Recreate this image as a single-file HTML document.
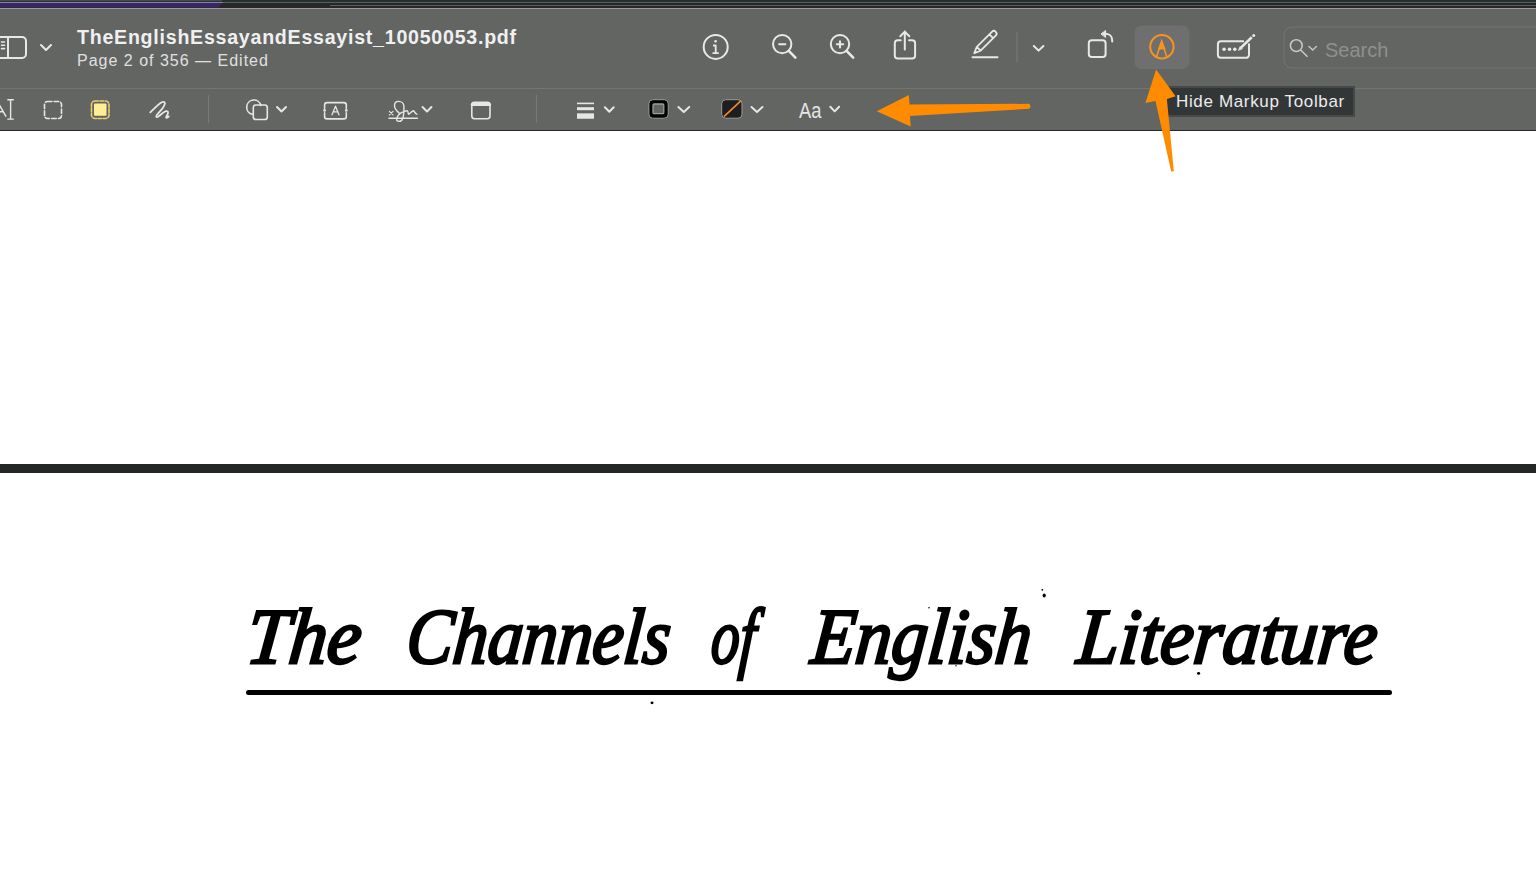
<!DOCTYPE html>
<html><head><meta charset="utf-8">
<style>
*{margin:0;padding:0;box-sizing:border-box}
html,body{width:1536px;height:895px;overflow:hidden;background:#fff;font-family:"Liberation Sans",sans-serif}
.abs{position:absolute}
#toolbar{left:0;top:9px;width:1536px;height:122px;background:#636563}
.title{left:77px;top:25px;font-size:19.6px;font-weight:bold;color:#f0f0f0;letter-spacing:0.75px;white-space:nowrap;line-height:24px}
.sub{left:77px;top:52px;font-size:16px;color:#e0e0e0;white-space:nowrap;line-height:18px;letter-spacing:1.0px}
.search{left:1325px;top:37.5px;font-size:20.5px;color:#8f908f;line-height:24px;transform:scaleX(0.975);transform-origin:0 0}
.aa{left:799px;top:98.6px;font-size:21.5px;color:#e6e6e6;line-height:24px;transform:scaleX(0.85);transform-origin:0 0}
.tip{left:1165px;top:86px;width:189.5px;height:30.5px;background:#333637;border:2px solid #474949}
.tiptxt{left:1176px;top:91.5px;font-size:17px;letter-spacing:0.65px;color:#ececec;white-space:nowrap;line-height:19px}
.w{position:absolute;font-family:"Liberation Serif",serif;font-style:italic;font-weight:normal;font-size:80px;color:#000;-webkit-text-stroke:2.8px #000;line-height:80px;white-space:nowrap;transform-origin:0 65px}
svg.ov{position:absolute;left:0;top:0;overflow:visible}
</style></head><body>
<!-- top strip -->
<div class="abs" style="left:0;top:0;width:1536px;height:1px;background:#1d3036"></div>
<div class="abs" style="left:0;top:0;width:222px;height:1px;background:#4a4b49"></div>
<div class="abs" style="left:0;top:1px;width:1536px;height:1px;background:#2c2f2f"></div>
<div class="abs" style="left:0;top:1px;width:222px;height:1px;background:#27333c"></div>
<div class="abs" style="left:0;top:2px;width:1536px;height:1px;background:#5a5b5a"></div>
<div class="abs" style="left:0;top:2px;width:223px;height:1px;background:#8a8394"></div>
<div class="abs" style="left:0;top:3px;width:1536px;height:3px;background:#262828"></div>
<div class="abs" style="left:330px;top:5px;width:1206px;height:1px;background:#5e5f5e"></div>
<div class="abs" style="left:0;top:6px;width:1536px;height:2px;background:#262828"></div>
<div class="abs" style="left:0;top:3px;width:222px;height:4px;background:#372768;clip-path:polygon(0 0,100% 0,calc(100% - 3px) 100%,0 100%)"></div>
<div class="abs" style="left:0;top:7px;width:218px;height:1px;background:#2d2a40"></div>
<div class="abs" style="left:0;top:8px;width:1536px;height:1px;background:#9a9a9a"></div>
<div id="toolbar" class="abs"></div>
<div class="abs" style="left:0;top:88px;width:1536px;height:1px;background:#737573"></div>
<div class="abs" style="left:0;top:130px;width:1536px;height:1px;background:#262727"></div>

<div class="abs title">TheEnglishEssayandEssayist_10050053.pdf</div>
<div class="abs sub">Page 2 of 356 — Edited</div>

<svg class="ov" width="1536" height="131" viewBox="0 0 1536 131">
 <g fill="none" stroke="#e8e8e8" stroke-width="2" stroke-linecap="round" stroke-linejoin="round">
  <!-- sidebar -->
  <rect x="-6" y="37" width="32" height="21" rx="4"/>
  <line x1="8" y1="37" x2="8" y2="58"/>
  <path d="M1.5 42h3M1.5 45.3h3M1.5 48.6h3" stroke-width="1.6"/>
  <path d="M41 45l5 5 5-5"/>
  <!-- info -->
  <circle cx="715.7" cy="46.9" r="12"/>
  <path d="M713 45.5h2.7v7.5M712.5 53.2h6.3" stroke-width="1.8" stroke-linecap="butt"/>
  <circle cx="715.6" cy="41.3" r="1.3" fill="#e8e8e8" stroke="none"/>
  <!-- zoom out -->
  <circle cx="782.2" cy="44.1" r="9.2"/>
  <path d="M788.8 50.8l6.6 6.8" stroke-width="2.6"/>
  <path d="M779.1 44.3h6.3"/>
  <!-- zoom in -->
  <circle cx="840" cy="44.1" r="9.2"/>
  <path d="M846.6 50.8l6.6 6.8" stroke-width="2.6"/>
  <path d="M836.8 44.35h6.4M840 41.3v6.2"/>
  <!-- share -->
  <path d="M900.8 40.3h-3a3 3 0 0 0-3 3v12.3a3 3 0 0 0 3 3h14.3a3 3 0 0 0 3-3v-12.3a3 3 0 0 0-3-3h-3"/>
  <path d="M904.8 49.6v-18M900.3 36.2l4.5-4.6 4.5 4.6"/>
  <!-- pencil -->
  <path d="M972.5 57.3h25" />
  <g transform="translate(974.3 53.2) rotate(-45)"><path d="M0 0L6.2 -2.7H27.6A2.7 2.7 0 0 1 27.6 2.7H6.2Z M6.2 -2.7V2.7 M24 -2.7V2.7" stroke-width="1.8"/></g>
  <!-- divider -->
  <line x1="1017" y1="32.5" x2="1017" y2="62" stroke="#7a7b7a" stroke-width="1"/>
  <path d="M1033.8 46l4.8 4.6 4.8-4.6" stroke-width="2"/>
  <!-- rotate -->
  <rect x="1088.8" y="40.3" width="16.8" height="16.8" rx="3"/>
  <path d="M1105 33.8C1109.3 33.8 1112.2 36.5 1112.2 40.2V41.6"/>
  <path d="M1101.3 33.8l4.3-3.3v6.6z" fill="#e8e8e8" stroke-width="1"/>
 </g>
 <!-- markup button -->
 <rect x="1134.5" y="25.5" width="55" height="43.5" rx="7" fill="#6e6f6e"/>
 <g fill="none" stroke="#f5951f" stroke-width="2">
  <circle cx="1161.9" cy="46.8" r="11.7"/>
  <path d="M1156.3 57.6L1161.7 41L1167 57.6" stroke-width="1.6"/>
  <path d="M1158.4 49L1161.7 41L1165.1 49z" fill="#f5951f" stroke-width="1"/>
 </g>
 <g fill="none" stroke="#e8e8e8" stroke-width="2" stroke-linecap="round" stroke-linejoin="round">
  <!-- signature/form -->
  <path d="M1243.2 41.2h-22.3a3 3 0 0 0-3 3v10.6a3 3 0 0 0 3 3h25.1a3 3 0 0 0 3-3v-10.6"/>
  <path d="M1241 47.6l10.8-10.3" stroke-width="2.6" stroke-linecap="butt"/>
  <path d="M1238.6 50l1.5-3.4 2 2z" fill="#e8e8e8" stroke-width="0.8"/>
  <circle cx="1253.7" cy="35.5" r="1.5" fill="#e8e8e8" stroke="none"/>
  <circle cx="1224.1" cy="49.3" r="1.8" fill="#e8e8e8" stroke="none"/>
  <circle cx="1229.5" cy="49.3" r="1.8" fill="#e8e8e8" stroke="none"/>
  <circle cx="1234.8" cy="49.3" r="1.8" fill="#e8e8e8" stroke="none"/>
 </g>
 <!-- search field -->
 <rect x="1284" y="27" width="300" height="41" rx="8" fill="none" stroke="#747574" stroke-width="1"/>
 <g fill="none" stroke="#c6c7c6" stroke-width="1.6" stroke-linecap="round">
  <circle cx="1296.3" cy="45.6" r="5.9"/>
  <path d="M1301 50.3l6 6"/>
  <path d="M1309 46.5l3.7 3.6 3.7-3.6" stroke-width="1.4"/>
 </g>

 <!-- row 2 -->
 <g fill="none" stroke="#e6e6e6" stroke-width="1.6" stroke-linecap="round" stroke-linejoin="round">
  <!-- A I -->
  <path d="M-2 102.5l7.8 13.7M-1 111.7h3.5" stroke-width="1.5"/>
  <path d="M10.6 99.8v19.3M7.3 99.8h6.5M7.3 119.1h6.5" stroke-width="1.4" stroke-linecap="butt"/>
  <!-- dashed rect -->
  <rect x="44.5" y="101.5" width="17" height="17" rx="3" stroke-dasharray="4.5 2.2"/>
  <!-- smart lasso -->
  <rect x="91.5" y="101" width="17.5" height="17.5" rx="3.5" stroke="#e9cf6a" stroke-width="1.6" stroke-dasharray="3.5 1.6"/>
  <rect x="94" y="103.6" width="12.5" height="12.2" rx="1" fill="#fdef95" stroke="none"/>
  <!-- squiggle -->
  <path d="M150.3 112.3C155 108 160 102 163 101.8C166 101.5 165.2 105 162.3 108.6C159.3 112.3 155 116 156.5 117.1C158 118.2 162.3 112.2 166 111.1C169 110.5 168.2 114 166.7 116C165.2 118 167 118.6 168.8 116.4" stroke-width="1.8"/>
  <!-- divider -->
  <line x1="208.5" y1="95.7" x2="208.5" y2="123.7" stroke="#7d7e7d" stroke-width="1" stroke-dasharray="1 1"/>
  <!-- shapes -->
  <path d="M252.5 114.3a7.2 7.2 0 1 1 8.4-8.8"/>
  <rect x="253.3" y="105" width="14" height="14.5" rx="2.6"/>
  <path d="M277 107l4.5 4.5 4.5-4.5" stroke-width="2"/>
  <!-- text box -->
  <path d="M324.6 108.2v-3.1a2.5 2.5 0 0 1 2.5-2.5h16.7a2.5 2.5 0 0 1 2.5 2.5v3.1M324.6 112.7v3.7a2.5 2.5 0 0 0 2.5 2.5h16.7a2.5 2.5 0 0 0 2.5-2.5v-3.7"/><circle cx="324.6" cy="110.4" r="0.6" fill="#e6e6e6"/><circle cx="346.3" cy="110.4" r="0.6" fill="#e6e6e6"/>
  <path d="M332 114.8l3.5-8.6 3.5 8.6M333.3 111.8h4.4" stroke-width="1.3"/>
  <!-- signature -->
  <path d="M389 118.2h28.4" stroke-width="1.5"/>
  <path d="M389.4 111.3l3.6 3.6M393 111.3l-3.6 3.6" stroke-width="1.2"/>
  <path d="M399 112.9C396.5 110.8 394.5 108.5 394.5 105.8C394.5 103.2 396.3 101.4 398.6 101.4C401.5 101.4 403.8 103.6 403.9 106.5C404.1 110 403.9 114 403.2 117C402.5 120 401 121.4 399 121.4C397.4 121.4 396.3 120.6 396.6 119.2C397 117 399 114 401.5 112.6C403.5 111.5 405.8 110.8 407.2 110.8C408.3 110.8 408 114.2 408.6 114.3C409.5 114.4 412 110.8 413.5 110.8C414.5 110.8 414.5 113.5 416.8 114.2" stroke-width="1.4"/>
  <path d="M422.5 107l4.5 4.5 4.5-4.5" stroke-width="2"/>
  <!-- window -->
  <rect x="471.8" y="102.4" width="18.2" height="16.3" rx="2.6"/>
  <path d="M472.2 104.6h17.4" stroke-width="3"/>
  <!-- divider -->
  <line x1="536.4" y1="95.4" x2="536.4" y2="123.3" stroke="#7d7e7d" stroke-width="1" stroke-dasharray="1 1"/>
  <!-- line weights -->
  <path d="M577 103.4h17" stroke-width="1.6" stroke-linecap="butt"/>
  <path d="M577 108.7h17" stroke-width="3" stroke-linecap="butt"/>
  <path d="M577 116.05h17" stroke-width="5.4" stroke-linecap="butt"/>
  <path d="M604.9 107.2l4.4 4.5 4.4-4.5" stroke-width="2"/>
  <path d="M678.4 107l5.4 5 5.4-5" stroke-width="2"/>
  <path d="M751.5 107l5.5 5 5.5-5" stroke-width="2"/>
  <path d="M830.3 106.8l4.4 4.6 4.4-4.6" stroke-width="2"/>
 </g>
 <!-- border color swatch -->
 <rect x="648.9" y="99.7" width="19.3" height="18.5" rx="4" fill="#000" stroke="#9a9a9a" stroke-width="1"/>
 <rect x="653" y="104" width="10.8" height="9.6" rx="1.2" fill="#636563" stroke="#9c9c9c" stroke-width="1.3"/>
 <!-- fill color swatch -->
 <rect x="721.7" y="99.7" width="20.3" height="18.5" rx="4" fill="#1e1e1e" stroke="#9a9a9a" stroke-width="1"/>
 <path d="M723.9 116.7L740.8 100.8" stroke="#f08a2a" stroke-width="1.7"/>
</svg>
<div class="abs search">Search</div>
<div class="abs aa">Aa</div>

<!-- tooltip -->
<div class="abs tip"></div>
<div class="abs tiptxt">Hide Markup Toolbar</div>

<!-- orange arrows -->
<svg class="ov" width="1536" height="895" viewBox="0 0 1536 895">
 <path d="M876.7 111.2L908.9 94.9L909.5 104.6L1029 103.8Q1032 106 1029 108.8L910 116L910.7 126.4Z" fill="#ff8b00"/>
 <path d="M1156.1 69.4L1175.6 96.2L1166.9 98.9L1173.8 171.3L1171.2 171.5L1155.5 100.9L1145.4 102.9Z" fill="#ff8b00"/>
</svg>

<!-- page separator -->
<div class="abs" style="left:0;top:464px;width:1536px;height:9px;background:#252626"></div>

<!-- page title -->
<div class="w" style="left:244.6px;top:595.5px;transform:scale(0.953,0.985) skewX(-6deg)">The</div>
<div class="w" style="left:405.3px;top:595.5px;transform:scale(0.872,0.985) skewX(-6deg)">Channels</div>
<div class="w" style="left:709.6px;top:595.5px;transform:scale(0.711,0.985) skewX(-6deg)">of</div>
<div class="w" style="left:810.2px;top:595.5px;transform:scale(0.899,0.985) skewX(-6deg)">English</div>
<div class="w" style="left:1076.2px;top:595.5px;transform:scale(0.931,0.985) skewX(-6deg)">Literature</div>
<div class="abs" style="left:246px;top:689.5px;width:1146px;height:5px;background:#000;border-radius:2.5px"></div>
<svg class="ov" width="1536" height="895" viewBox="0 0 1536 895" style="pointer-events:none">
 <g fill="#000">
  <ellipse cx="1044.2" cy="595.6" rx="1.6" ry="2"/>
  <circle cx="1042.3" cy="589.8" r="0.9"/>
  <circle cx="929" cy="607.8" r="0.8"/>
  <circle cx="956" cy="665.8" r="0.7"/>
  <ellipse cx="1198.6" cy="673.4" rx="1.6" ry="1.4"/>
  <ellipse cx="652" cy="702.8" rx="1.5" ry="1.4"/>
 </g>
</svg>
</body></html>
